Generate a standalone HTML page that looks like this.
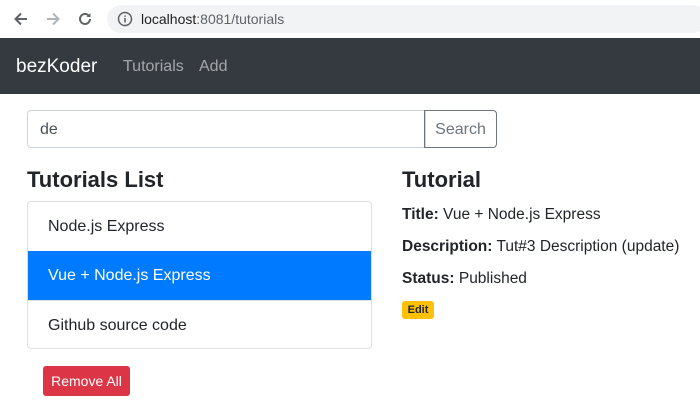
<!DOCTYPE html>
<html><head><meta charset="utf-8"><style>
*{box-sizing:border-box;margin:0;padding:0}
body{width:700px;height:420px;overflow:hidden;background:#fff;font-family:"Liberation Sans",sans-serif;color:#212529;position:relative}
.abs{position:absolute}
</style></head><body>
<div class="abs" style="left:0;top:0;width:700px;height:38px;background:#fff"></div>
<svg class="abs" style="left:12px;top:10px" width="18" height="18" viewBox="0 0 18 18"><path d="M15 9H4M9 3.5L3.5 9 9 14.5" stroke="#5f6368" stroke-width="2" fill="none"/></svg>
<svg class="abs" style="left:44px;top:10px" width="18" height="18" viewBox="0 0 18 18"><path d="M3 9h11M9 3.5L14.5 9 9 14.5" stroke="#b0b3b7" stroke-width="2" fill="none"/></svg>
<svg class="abs" style="left:76px;top:10px" width="18" height="18" viewBox="0 0 18 18"><path d="M14 9a5 5 0 1 1-1.5-3.6" stroke="#5f6368" stroke-width="2" fill="none"/><path d="M14.5 3v4h-4z" fill="#5f6368"/></svg>
<div class="abs" style="left:107px;top:5px;width:600px;height:28px;background:#f1f3f4;border-radius:14px"></div>
<svg class="abs" style="left:117px;top:11px" width="16" height="16" viewBox="0 0 16 16"><circle cx="8" cy="8" r="6.5" stroke="#5f6368" stroke-width="1.5" fill="none"/><path d="M8 7v4.5M8 4.5v1.3" stroke="#5f6368" stroke-width="1.6"/></svg>
<div class="abs" style="left:141px;top:11px;font-size:14px;color:#202124">localhost<span style="color:#5f6368">:8081/tutorials</span></div>
<div class="abs" style="left:0;top:38px;width:700px;height:56px;background:#343a40"></div>
<div class="abs" style="left:16px;top:56px;font-size:19px;color:#fff">bezKoder</div>
<div class="abs" style="left:123px;top:58px;font-size:16px;color:rgba(255,255,255,.55)">Tutorials</div>
<div class="abs" style="left:199px;top:58px;font-size:16px;color:rgba(255,255,255,.55)">Add</div>
<div class="abs" style="left:27px;top:110px;width:399px;height:38px;border:1px solid #ced4da;border-radius:4px 0 0 4px;padding:10px 12px;font-size:16px;color:#495057">de</div>
<div class="abs" style="left:424px;top:110px;width:73px;height:38px;border:1px solid #6c757d;border-radius:0 4px 4px 0;font-size:16px;color:#6c757d;text-align:center;line-height:38px">Search</div>
<div class="abs" style="left:27px;top:167px;font-size:22px;font-weight:bold">Tutorials List</div>
<div class="abs" style="left:27px;top:201px;width:345px;height:148px;border:1px solid rgba(0,0,0,.125);border-radius:4px;overflow:hidden">
<div style="height:49px;padding:0 20px;line-height:50px;font-size:16px">Node.js Express</div>
<div style="height:49px;padding:0 20px;line-height:50px;font-size:16px;background:#007bff;color:#fff">Vue + Node.js Express</div>
<div style="height:49px;padding:0 20px;line-height:50px;font-size:16px;border-top:1px solid rgba(0,0,0,.125)">Github source code</div>
</div>
<div class="abs" style="left:43px;top:366px;width:87px;height:30px;background:#dc3545;border-radius:3px;color:#fff;font-size:14px;text-align:center;line-height:30px">Remove All</div>
<div class="abs" style="left:402px;top:167px;font-size:22px;font-weight:bold">Tutorial</div>
<div class="abs" style="left:402px;top:206px;font-size:15.5px"><b>Title:</b> Vue + Node.js Express</div>
<div class="abs" style="left:402px;top:238px;font-size:15.5px"><b>Description:</b> Tut#3 Description (update)</div>
<div class="abs" style="left:402px;top:270px;font-size:15.5px"><b>Status:</b> Published</div>
<div class="abs" style="left:402px;top:301px;width:32px;height:18px;background:#ffc107;border-radius:3px;font-size:11px;font-weight:bold;text-align:center;line-height:18px">Edit</div>
</body></html>
